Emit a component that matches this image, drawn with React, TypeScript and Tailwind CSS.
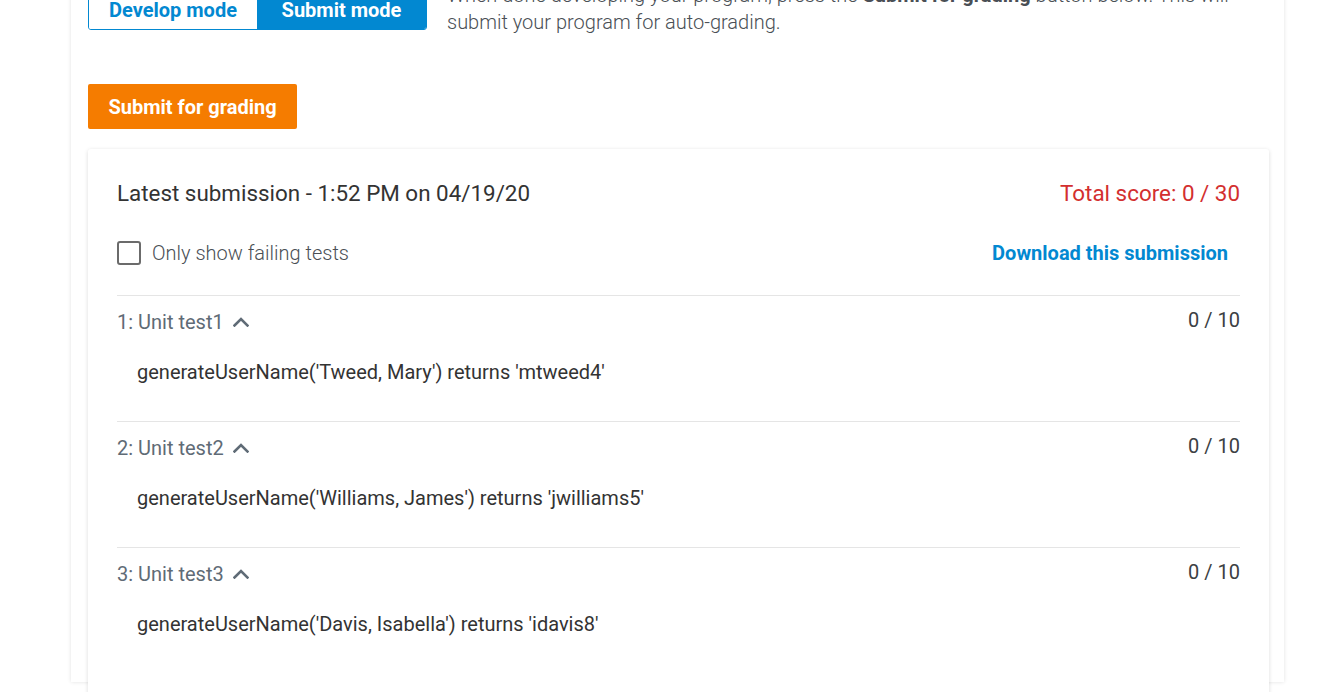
import React from "react";

const tests = [
  { n: 1, name: "Unit test1", desc: "generateUserName('Tweed, Mary') returns 'mtweed4'" },
  { n: 2, name: "Unit test2", desc: "generateUserName('Williams, James') returns 'jwilliams5'" },
  { n: 3, name: "Unit test3", desc: "generateUserName('Davis, Isabella') returns 'idavis8'" },
];

function ChevronUp() {
  return (
    <svg width="16" height="10" viewBox="0 0 16 10" className="ml-[9px]" fill="none">
      <polyline points="1.5,8.5 8,2 14.5,8.5" stroke="#5f6b76" strokeWidth="2.6" strokeLinecap="square" />
    </svg>
  );
}

export default function App() {
  return (
    <div
      className="w-[1330px] h-[692px] overflow-hidden bg-white"
      style={{ fontFamily: "Roboto, 'Noto Sans', sans-serif" }}
    >
      <div className="ml-[71px] w-[1213px] h-full bg-white shadow-[0_0_4px_rgba(0,0,0,0.12)] pl-[17px] pr-[15px]">
        <div className="flex items-start -mt-[10px]">
          <div className="flex shrink-0 h-[40px] border border-[#0288d1] rounded-[3px] overflow-hidden">
            <div className="w-[168px] flex items-center justify-center text-[20px] font-bold text-[#0288d1] bg-white">
              Develop mode
            </div>
            <div className="w-[169px] flex items-center justify-center text-[20px] font-bold text-white bg-[#0288d1]">
              Submit mode
            </div>
          </div>
          <div className="ml-[20px] -mt-[8px] text-[20px] font-light leading-[27px] text-[#4a4f55] w-[800px] shrink-0">
            When done developing your program, press the <span className="font-bold">Submit for grading</span> button below. This will submit your program for auto-grading.
          </div>
        </div>

        <button className="mt-[48px] h-[45px] w-[209px] bg-[#f57c00] rounded-[2px] text-white font-bold text-[20px]">
          Submit for grading
        </button>

        <div className="mt-[20px] bg-white rounded-t-[3px] shadow-[0_1px_4px_rgba(0,0,0,0.14)] px-[29px] pt-[30px] pb-[40px]">
          <div className="flex justify-between items-center h-[30px]">
            <div className="text-[22.4px] text-[#333]">Latest submission - 1:52 PM on 04/19/20</div>
            <div className="text-[22.4px] text-[#d32f2f]">Total score: 0 / 30</div>
          </div>
          <div className="mt-[24px] h-[40px] flex items-center justify-between">
            <label className="flex items-center">
              <span className="w-[24px] h-[24px] border-2 border-[#6b6b6b] rounded-[3px] bg-white" />
              <span className="ml-[11px] text-[20px] font-light text-[#4a4f55]">Only show failing tests</span>
            </label>
            <span className="mr-[12px] text-[20px] font-bold text-[#0288d1]">Download this submission</span>
          </div>
          <div className="mt-[22px]">
            {tests.map((t) => (
              <div key={t.n} className="border-t border-[#e5e5e5] pt-[14px] pb-[37px]">
                <div className="flex justify-between items-start">
                  <div className="flex items-center h-[24px] text-[20px] text-[#5f6b76]">
                    {t.n}: {t.name}
                    <ChevronUp />
                  </div>
                  <div className="h-[24px] -mt-[2px] flex items-center text-[20px] text-[#3c4043]">0 / 10</div>
                </div>
                <div className="mt-[26px] ml-[20px] h-[24px] flex items-center text-[20px] text-[#333]">
                  {t.desc}
                </div>
              </div>
            ))}
          </div>
        </div>
      </div>
    </div>
  );
}
